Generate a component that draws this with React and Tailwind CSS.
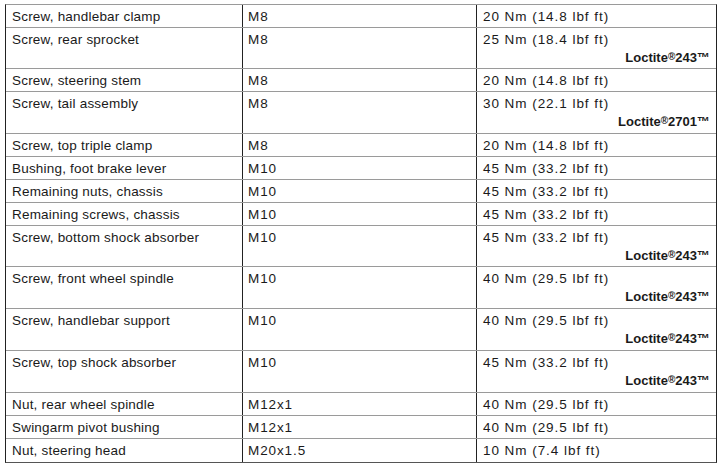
import React from "react";

const rows = [
  ["Screw, handlebar clamp", "M8", "20 Nm (14.8 lbf ft)", null, "h-[23px]"],
  ["Screw, rear sprocket", "M8", "25 Nm (18.4 lbf ft)", "243", "h-[41px]"],
  ["Screw, steering stem", "M8", "20 Nm (14.8 lbf ft)", null, "h-[23px]"],
  ["Screw, tail assembly", "M8", "30 Nm (22.1 lbf ft)", "2701", "h-[42px]"],
  ["Screw, top triple clamp", "M8", "20 Nm (14.8 lbf ft)", null, "h-[23px]"],
  ["Bushing, foot brake lever", "M10", "45 Nm (33.2 lbf ft)", null, "h-[23px]"],
  ["Remaining nuts, chassis", "M10", "45 Nm (33.2 lbf ft)", null, "h-[23px]"],
  ["Remaining screws, chassis", "M10", "45 Nm (33.2 lbf ft)", null, "h-[23px]"],
  ["Screw, bottom shock absorber", "M10", "45 Nm (33.2 lbf ft)", "243", "h-[41px]"],
  ["Screw, front wheel spindle", "M10", "40 Nm (29.5 lbf ft)", "243", "h-[42px]"],
  ["Screw, handlebar support", "M10", "40 Nm (29.5 lbf ft)", "243", "h-[42px]"],
  ["Screw, top shock absorber", "M10", "45 Nm (33.2 lbf ft)", "243", "h-[42px]"],
  ["Nut, rear wheel spindle", "M12x1", "40 Nm (29.5 lbf ft)", null, "h-[23px]"],
  ["Swingarm pivot bushing", "M12x1", "40 Nm (29.5 lbf ft)", null, "h-[23px]"],
  ["Nut, steering head", "M20x1.5", "10 Nm (7.4 lbf ft)", null, "h-[23px]"],
];

export default function App() {
  return (
    <div className="w-[723px] h-[469px] bg-white pt-[4px] pl-[5px] text-[#1a1a1a] font-['Liberation_Sans',Arial,sans-serif] text-[13.5px] leading-[19px]">
      <div className="w-[712px] border-t border-t-[#9a9a9a] border-b border-b-[#555] border-x border-x-[#222]">
        {rows.map(([a, b, c, loc, h], i) => (
          <div
            key={i}
            className={`grid grid-cols-[236px_234px_1fr] ${h} ${i < rows.length - 1 ? "border-b border-b-[#9a9a9a]" : ""}`}
          >
            <div className="pl-[6px] pt-[2px] tracking-[0.2px]">{a}</div>
            <div className="border-l border-l-[#222] pl-[5px] pt-[2px] tracking-[0.9px]">{b}</div>
            <div className="border-l border-l-[#222] pl-[6px] pr-[6px] pt-[2px] flex flex-col">
              <span className="tracking-[0.95px]">{c}</span>
              {loc && (
                <span className="self-end font-bold font-['Liberation_Sans_Narrow','Liberation_Sans',Arial,sans-serif] text-[13px] leading-[19px] -mt-px">
                  Loctite<span className="text-[10px] relative -top-[2px] leading-none">®</span>{loc}™
                </span>
              )}
            </div>
          </div>
        ))}
      </div>
    </div>
  );
}
